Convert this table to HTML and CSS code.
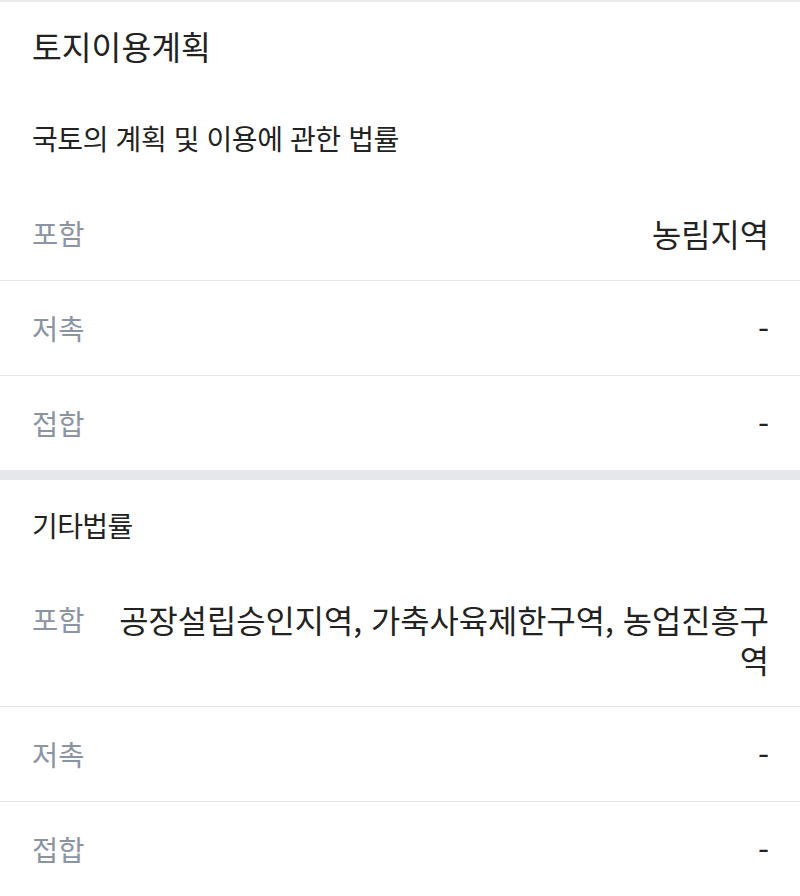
FILE: index.html
```html
<!DOCTYPE html>
<html lang="ko">
<head>
<meta charset="utf-8">
<title>토지이용계획</title>
<link rel="stylesheet" href="styles.css">
</head>
<body>
<main class="page">
  <section class="section first">
    <h1 class="title">토지이용계획</h1>
    <h2 class="subtitle">국토의 계획 및 이용에 관한 법률</h2>
    <div class="row">
      <span class="label">포함</span>
      <span class="value">농림지역</span>
    </div>
    <div class="row">
      <span class="label">저촉</span>
      <span class="value">-</span>
    </div>
    <div class="row last">
      <span class="label">접합</span>
      <span class="value">-</span>
    </div>
  </section>
  <div class="band"></div>
  <section class="section">
    <h2 class="subtitle">기타법률</h2>
    <div class="row">
      <span class="label">포함</span>
      <span class="value">공장설립승인지역, 가축사육제한구역, 농업진흥구역</span>
    </div>
    <div class="row">
      <span class="label">저촉</span>
      <span class="value">-</span>
    </div>
    <div class="row last">
      <span class="label">접합</span>
      <span class="value">-</span>
    </div>
  </section>
</main>
</body>
</html>
```
FILE: styles.css
```css
* { box-sizing: border-box; }
html, body {
  margin: 0;
  padding: 0;
  background: #ffffff;
}
body {
  font-family: "Noto Sans CJK KR", "Noto Sans", sans-serif;
  color: #222222;
}
.page {
  border-top: 2px solid #ebebeb;
}
.title {
  margin: 24px 0 0;
  padding: 0 31px 0 32px;
  font-size: 32.4px;
  line-height: 40px;
  font-weight: 400;
  color: #222222;
}
.subtitle {
  margin: 25px 0 27px;
  padding: 0 31px 0 32px;
  font-size: 28px;
  line-height: 40px;
  font-weight: 400;
  letter-spacing: -0.6px;
  color: #222222;
}
.first .subtitle {
  margin: 52px 0 28px;
  letter-spacing: -0.4px;
}
.row {
  display: flex;
  align-items: flex-start;
  justify-content: space-between;
  gap: 28px;
  padding: 27px 31px 27px 32px;
  border-bottom: 1px solid #e6e6e6;
}
.row.last {
  border-bottom: none;
}
.label {
  flex-shrink: 0;
  font-size: 28.5px;
  line-height: 40px;
  color: #8b94a3;
}
.value {
  flex: 1;
  text-align: right;
  font-size: 31.8px;
  line-height: 40px;
  color: #222222;
}
.band {
  height: 10px;
  background: #e5e7ea;
}
```
